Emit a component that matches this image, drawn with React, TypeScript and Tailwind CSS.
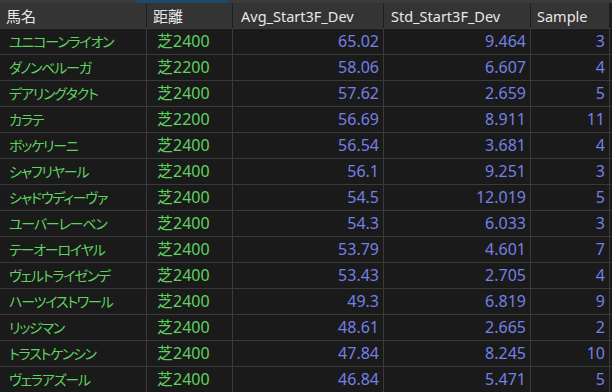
import React from 'react';

type Row = {
  name: string;
  dist: string;
  avg: string;
  std: string;
  n: string;
};

const rows: Row[] = [
  { name: 'ユニコーンライオン', dist: '芝2400', avg: '65.02', std: '9.464', n: '3' },
  { name: 'ダノンベルーガ', dist: '芝2200', avg: '58.06', std: '6.607', n: '4' },
  { name: 'デアリングタクト', dist: '芝2400', avg: '57.62', std: '2.659', n: '5' },
  { name: 'カラテ', dist: '芝2200', avg: '56.69', std: '8.911', n: '11' },
  { name: 'ボッケリーニ', dist: '芝2400', avg: '56.54', std: '3.681', n: '4' },
  { name: 'シャフリヤール', dist: '芝2400', avg: '56.1', std: '9.251', n: '3' },
  { name: 'シャドウディーヴァ', dist: '芝2400', avg: '54.5', std: '12.019', n: '5' },
  { name: 'ユーバーレーベン', dist: '芝2400', avg: '54.3', std: '6.033', n: '3' },
  { name: 'テーオーロイヤル', dist: '芝2400', avg: '53.79', std: '4.601', n: '7' },
  { name: 'ヴェルトライゼンデ', dist: '芝2400', avg: '53.43', std: '2.705', n: '4' },
  { name: 'ハーツイストワール', dist: '芝2400', avg: '49.3', std: '6.819', n: '9' },
  { name: 'リッジマン', dist: '芝2400', avg: '48.61', std: '2.665', n: '2' },
  { name: 'トラストケンシン', dist: '芝2400', avg: '47.84', std: '8.245', n: '10' },
  { name: 'ヴェラアズール', dist: '芝2400', avg: '46.84', std: '5.471', n: '5' },
];

const font = { fontFamily: '"Noto Sans", "Noto Sans CJK JP", sans-serif' };

export default function App() {
  return (
    <div className="w-[612px] h-[392px] overflow-hidden bg-[#1a1a1a]" style={font}>
      {/* top scroll strip */}
      <div className="h-[3px] bg-[#3a3a3a] flex">
        <div className="w-[136px]" />
        <div className="w-[92px] bg-[#1d4a68]" />
      </div>

      {/* header */}
      <div className="flex h-[26px] text-[14.5px] leading-[26px] text-[#e8e8e8] bg-[#1e1e1e] border-b border-[#3a3a3a]">
        <div className="w-[146px] mr-[1px] bg-[#343434] pl-[6px] text-[15px]">馬名</div>
        <div className="w-[85px] mr-[1px] bg-[#343434] pl-[6px] text-[15px]">距離</div>
        <div className="w-[150px] mr-[1px] bg-[#343434] pl-[8px]">Avg_Start3F_Dev</div>
        <div className="w-[146px] mr-[1px] bg-[#343434] pl-[7px]">Std_Start3F_Dev</div>
        <div className="w-[78px] mr-[1px] bg-[#343434] pl-[6px]">Sample</div>
      </div>

      {/* body */}
      {rows.map((r) => (
        <div key={r.name} className="flex h-[26px] leading-[25px] text-[16px] border-b border-[#3a3a3a]">
          <div className="w-[147px] border-r border-[#3a3a3a] pl-[9px] text-[#5fd35f] text-[14px] [font-feature-settings:'palt'] tracking-[-1.2px]">
            {r.name}
          </div>
          <div className="w-[86px] border-r border-[#3a3a3a] pl-[10px] text-[#5fd35f]">{r.dist}</div>
          <div className="w-[151px] border-r border-[#3a3a3a] pr-[4px] text-right text-[#7480e6]">{r.avg}</div>
          <div className="w-[147px] border-r border-[#3a3a3a] pr-[4px] text-right text-[#7480e6]">{r.std}</div>
          <div className="w-[79px] border-r border-[#3a3a3a] pr-[4px] text-right text-[#7480e6]">{r.n}</div>
        </div>
      ))}
    </div>
  );
}
